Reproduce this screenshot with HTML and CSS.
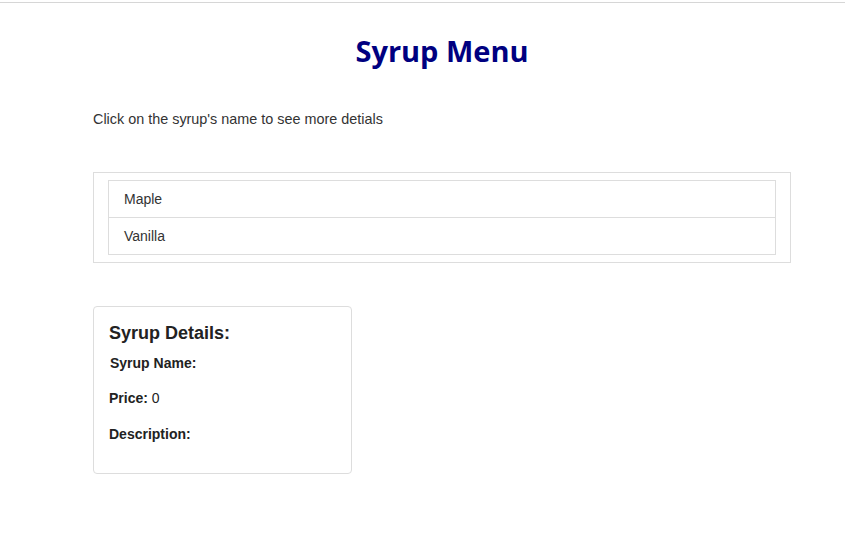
FILE: index.html
```html
<!DOCTYPE html>
<html>
<head>
    <meta charset="UTF-8">
    <title>Syrup Menu</title>
    <link rel="stylesheet" href="styles.css">
</head>
<body>
    <div class="top-bar"></div>
    <div class="page">
        <h1 class="title">Syrup Menu</h1>
        <p class="hint">Click on the syrup's name to see more detials</p>
        <div class="syrup-box">
            <ul class="syrup-list">
                <li>Maple</li>
                <li>Vanilla</li>
            </ul>
        </div>
        <div class="details">
            <h3>Syrup Details:</h3>
            <p class="name"><b>Syrup Name:</b></p>
            <p><b>Price:</b> 0</p>
            <p><b>Description:</b></p>
        </div>
    </div>
</body>
</html>
```

FILE: styles.css
```css
body {
    margin: 0;
    font-family: "Liberation Sans", Arial, sans-serif;
    font-size: 14px;
    color: #333;
    background: #fff;
}
.top-bar {
    height: 2px;
    border-bottom: 1px solid #d6d6d6;
}
.page {
    margin-left: 93px;
    width: 698px;
}
.title {
    margin: 0;
    padding-top: 30px;
    height: 40px;
    line-height: 36px;
    text-align: center;
    font-family: "Open Sans", "Noto Sans", sans-serif;
    font-size: 29px;
    font-weight: bold;
    color: #000080;
}
.hint {
    margin: 36px 0 0;
    font-size: 14.4px;
    line-height: 20px;
}
.syrup-box {
    margin-top: 43px;
    border: 1px solid #ddd;
    padding: 7px 14px;
}
.syrup-list {
    list-style: none;
    margin: 0;
    padding: 0;
    border: 1px solid #ddd;
}
.syrup-list li {
    padding: 8px 15px;
    line-height: 20px;
    border-top: 1px solid #ddd;
    cursor: pointer;
}
.syrup-list li:first-child {
    border-top: none;
}
.details {
    margin-top: 43px;
    width: 227px;
    border: 1px solid #ddd;
    border-radius: 4px;
    padding: 13px 15px 29px;
}
.details h3 {
    margin: 0 0 7px;
    font-size: 18px;
    line-height: 26px;
    color: #222;
}
.details p {
    margin: 0 0 16px;
    line-height: 20px;
    color: #222;
}
.details p.name {
    margin-bottom: 15px;
    padding-left: 1px;
}
.details p:last-child {
    margin-bottom: 0;
}
```
